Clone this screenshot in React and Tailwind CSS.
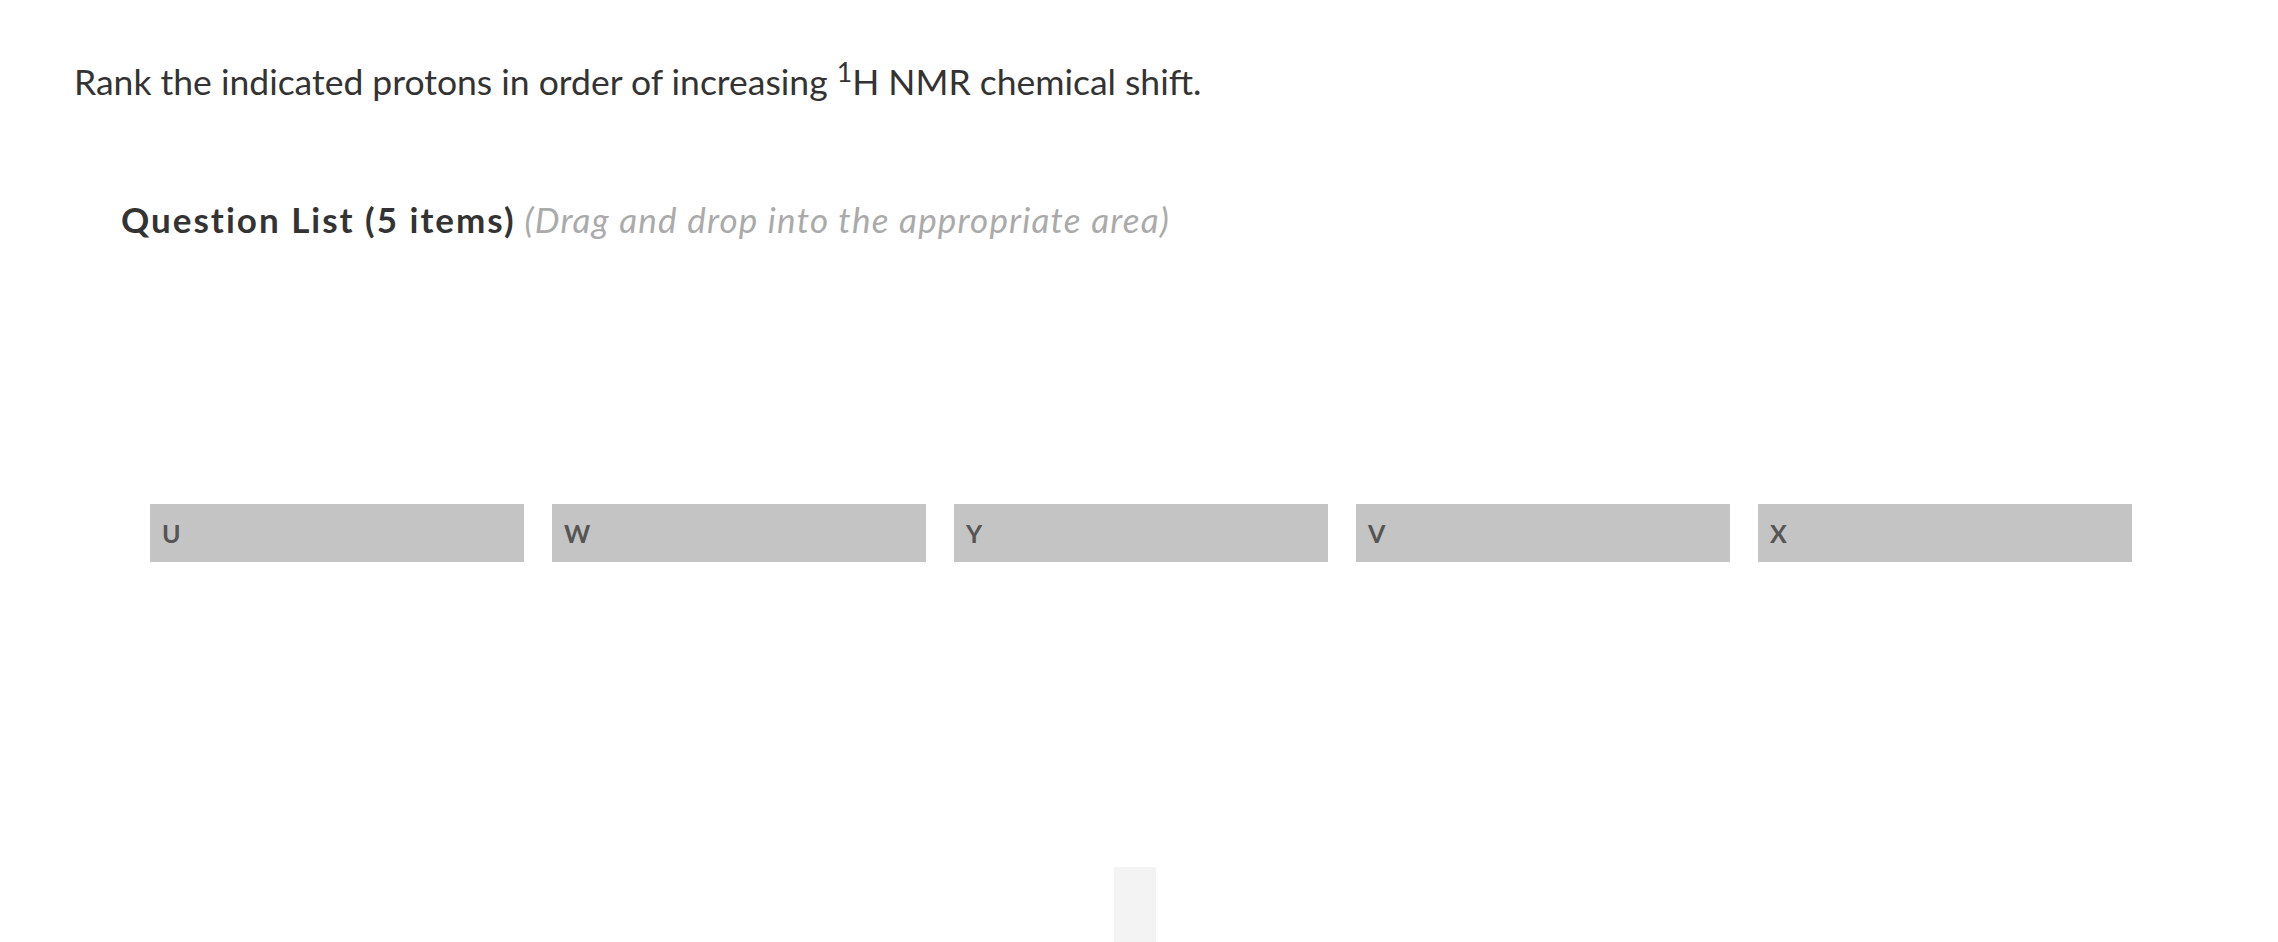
import React from 'react';

const items = ['U', 'W', 'Y', 'V', 'X'];

const DragItem = ({ label }) => (
  <div className="w-[374px] h-[58px] bg-[#c4c4c4] flex items-center pl-[12px]">
    <span className="text-[25px] font-bold text-[#555] leading-none">{label}</span>
  </div>
);

export default function App() {
  return (
    <div className="min-h-screen bg-white font-['Lato','Open_Sans',sans-serif] text-[#333] overflow-hidden">
      <p className="pl-[74px] pt-[62px] text-[35.5px] leading-[40px]">
        Rank the indicated protons in order of increasing <sup>1</sup>H NMR chemical shift.
      </p>

      <div className="pl-[121px] mt-[97px] text-[35px] leading-[40px]">
        <span className="font-bold tracking-[2px]">Question List (5 items)</span>{' '}
        <span className="italic tracking-[1.2px] text-[#aaa]">(Drag and drop into the appropriate area)</span>
      </div>

      <div className="pl-[150px] mt-[265px] flex gap-[28px]">
        {items.map((l) => (
          <DragItem key={l} label={l} />
        ))}
      </div>

      {/* empty drop slot peeking in at the bottom */}
      <div className="ml-[1114px] mt-[305px] w-[42px] h-[80px] bg-[#f3f3f3]" />
    </div>
  );
}
